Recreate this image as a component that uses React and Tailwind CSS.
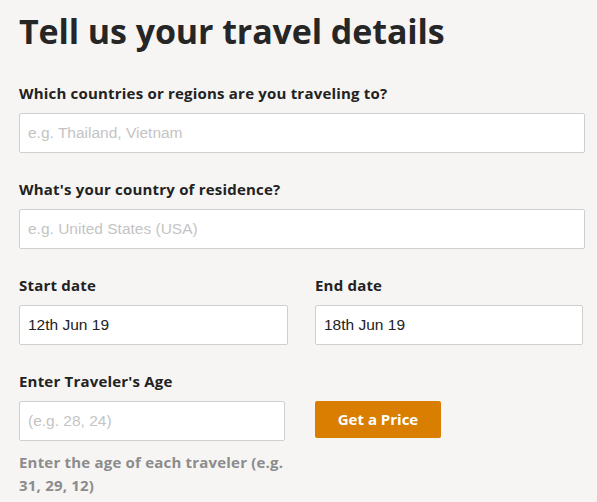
import React from 'react';

const font = { fontFamily: '"Open Sans", "Liberation Sans", sans-serif' };

const Field = ({ label, placeholder, value, className = '' }) => (
  <div className={className}>
    <label className="block text-[15px] tracking-[0.2px] font-bold text-[#222] leading-[20px] mb-[10px]">{label}</label>
    <input
      readOnly
      placeholder={placeholder}
      defaultValue={value}
      className="block w-full h-[40px] bg-white border border-[#cfcfcf] rounded-[2px] px-[8px] text-[15.5px] text-[#222] placeholder-[#c4c4c4] font-['Liberation_Sans',sans-serif] outline-none"
    />
  </div>
);

export default function App() {
  return (
    <div className="min-h-screen bg-[#f6f5f3] px-[19px] pt-[10px] pb-4" style={font}>
      <h1 className="text-[34px] font-bold text-[#262626] leading-[42px] tracking-[-0.1px]">Tell us your travel details</h1>

      <div className="mt-[31px] w-[566px] flex flex-col gap-[26px]">
        <Field label="Which countries or regions are you traveling to?" placeholder="e.g. Thailand, Vietnam" />
        <Field label="What's your country of residence?" placeholder="e.g. United States (USA)" />

        <div className="flex gap-[27px]">
          <Field className="w-[269px]" label="Start date" value="12th Jun 19" />
          <Field className="w-[268px]" label="End date" value="18th Jun 19" />
        </div>

        <div className="flex gap-[30px]">
          <div className="w-[266px]">
            <Field label="Enter Traveler's Age" placeholder="(e.g. 28, 24)" />
            <p className="mt-[10px] text-[15px] tracking-[0.2px] font-bold text-[#8c8c8c] leading-[23px]">
              Enter the age of each traveler (e.g. 31, 29, 12)
            </p>
          </div>
          <div className="pt-[30px]">
            <button className="w-[126px] h-[37px] bg-[#d97e00] text-white text-[15px] font-bold rounded-[2px]">
              Get a Price
            </button>
          </div>
        </div>
      </div>
    </div>
  );
}
